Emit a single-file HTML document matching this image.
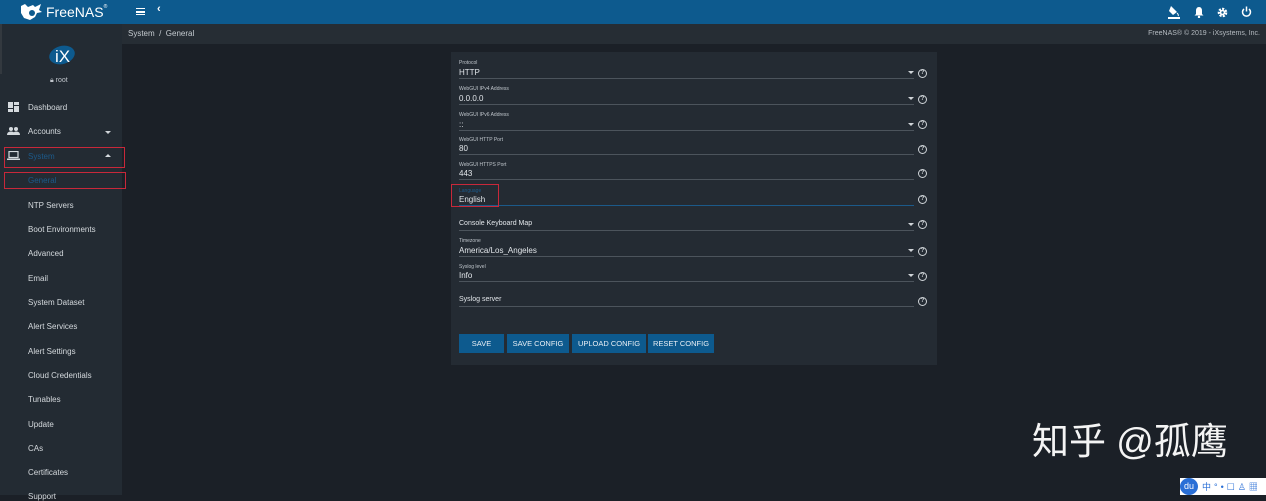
<!DOCTYPE html>
<html><head><meta charset="utf-8"><style>
*{margin:0;padding:0;box-sizing:border-box}
body{width:1266px;height:495px;overflow:hidden;background:#1b2027;font-family:"Liberation Sans","Noto Sans CJK SC",sans-serif;color:#d8dde2;position:relative}
.a{position:absolute}
#top{left:0;top:0;width:1266px;height:24px;background:#0d5a8e}
#side{left:0;top:24px;width:122px;height:471px;background:#232b33}
#crumb{left:122px;top:24px;width:1144px;height:20px;background:#262d34}
.nav{position:absolute;left:28px;font-size:8px;color:#d5dade}
.card{left:451px;top:52px;width:486px;height:313px;background:#242b33}
.lbl{position:absolute;left:459px;font-size:5px;color:#bfc5cb}
.val{position:absolute;left:459px;font-size:8px;color:#e2e6ea}
.ln{position:absolute;left:459px;width:455px;height:1px;background:#4c545c}
.q{position:absolute;left:918px;width:9px;height:9px;border:1px solid #cfd4d8;border-radius:50%;font-size:6px;line-height:7px;text-align:center;color:#cfd4d8;font-weight:bold}
.dd{position:absolute;left:908px;width:0;height:0;border-left:3px solid transparent;border-right:3px solid transparent;border-top:3px solid #cfd4d8}
.btn{position:absolute;top:334px;height:19px;background:#0d5a8e;color:#e8eef4;font-size:7.5px;line-height:19px;text-align:center}
.red{position:absolute;border:1px solid #c8283a}
</style></head><body>
<div id="top" class="a">
<svg class="a" style="left:19px;top:3px" width="24" height="18" viewBox="0 0 24 18"><path d="M2 3 L6 1 L9 4 L14 2 L16 4 L22 1 L20 7 L23 9 L18 10 L16 14 L11 17 L5 15 L2 10 Z" fill="#fff"/><circle cx="13" cy="10" r="3" fill="#0d5a8e"/></svg>
<div class="a" style="left:46px;top:4px;font-size:14px;color:#fff">FreeNAS<span style="font-size:5px;vertical-align:top">®</span></div>
<div class="a" style="left:136px;top:8px;width:9px;height:7px;border-top:1.5px solid #fff;border-bottom:1.5px solid #fff"></div>
<div class="a" style="left:136px;top:11px;width:9px;height:1.5px;background:#fff"></div>
<div class="a" style="left:157px;top:3px;font-size:11px;color:#fff;font-weight:bold">‹</div>
<svg class="a" style="left:1168px;top:5px" width="12" height="14" viewBox="0 0 12 14"><path d="M3 1 L9 7 L5 10 L1 6 Z" fill="#fff"/><path d="M9 8 Q11 10 10 11" stroke="#fff" fill="none"/><rect x="0" y="12" width="12" height="2" fill="#fff"/></svg>
<svg class="a" style="left:1194px;top:6px" width="10" height="12" viewBox="0 0 10 12"><path d="M5 1 Q8 1 8 5 L8 8 L9.5 9.5 L0.5 9.5 L2 8 L2 5 Q2 1 5 1Z" fill="#fff"/><circle cx="5" cy="11" r="1.2" fill="#fff"/></svg>
<svg class="a" style="left:1217px;top:7px" width="11" height="11" viewBox="0 0 11 11"><circle cx="5.5" cy="5.5" r="3.5" fill="none" stroke="#fff" stroke-width="2.6" stroke-dasharray="2 1.2"/><circle cx="5.5" cy="5.5" r="2.8" fill="#fff"/><circle cx="5.5" cy="5.5" r="1.2" fill="#0d5a8e"/></svg>
<svg class="a" style="left:1241px;top:6px" width="11" height="11" viewBox="0 0 11 11"><path d="M3 3 A4 4 0 1 0 8 3" fill="none" stroke="#fff" stroke-width="1.5"/><path d="M5.5 0.5 V5.5" stroke="#fff" stroke-width="1.5"/></svg>
</div>
<div id="side" class="a">
<svg class="a" style="left:48px;top:20px" width="28" height="22" viewBox="0 0 28 22"><ellipse cx="14" cy="11" rx="13" ry="9" fill="#0d5a8e" transform="rotate(-15 14 11)"/><text x="7" y="18" font-size="17" fill="#fff" font-family="Liberation Sans">iX</text></svg>
<div class="a" style="left:50px;top:53px;font-size:7px;color:#bfc5cb">🔒︎ root</div>
</div>
<div class="a" style="left:0;top:24px;width:2px;height:50px;background:#33393f"></div>
<svg class="a" style="left:8px;top:102px" width="11" height="10" viewBox="0 0 11 10"><rect x="0" y="0" width="5" height="6" fill="#d5dade"/><rect x="6" y="0" width="5" height="3" fill="#d5dade"/><rect x="0" y="7" width="5" height="3" fill="#d5dade"/><rect x="6" y="4" width="5" height="6" fill="#d5dade"/></svg>
<div class="nav" style="top:103px">Dashboard</div>
<svg class="a" style="left:7px;top:127px" width="13" height="8" viewBox="0 0 13 8"><circle cx="4" cy="2" r="2" fill="#d5dade"/><circle cx="9" cy="2" r="2" fill="#d5dade"/><path d="M0 8 Q0 4.5 4 4.5 Q8 4.5 8 8Z M6 8 Q6 4.5 9 4.5 Q13 4.5 13 8Z" fill="#d5dade"/></svg>
<div class="nav" style="top:127px">Accounts</div>
<div class="dd" style="left:105px;top:131px"></div>
<svg class="a" style="left:7px;top:151px" width="13" height="9" viewBox="0 0 13 9"><rect x="2" y="0.5" width="9" height="6" fill="none" stroke="#d5dade" stroke-width="1.2"/><rect x="0" y="7.5" width="13" height="1.5" fill="#d5dade"/></svg>
<div class="nav" style="top:152px;color:#1c5a8a">System</div>
<div class="a" style="left:105px;top:154px;border-left:3px solid transparent;border-right:3px solid transparent;border-bottom:3px solid #d5dade"></div>
<div class="red" style="left:4px;top:147px;width:121px;height:21px"></div>
<div class="nav" style="top:176px;color:#1c5a8a">General</div>
<div class="red" style="left:4px;top:172px;width:122px;height:17px"></div>
<div class="nav" style="top:201px">NTP Servers</div>
<div class="nav" style="top:225px">Boot Environments</div>
<div class="nav" style="top:249px">Advanced</div>
<div class="nav" style="top:274px">Email</div>
<div class="nav" style="top:298px">System Dataset</div>
<div class="nav" style="top:322px">Alert Services</div>
<div class="nav" style="top:347px">Alert Settings</div>
<div class="nav" style="top:371px">Cloud Credentials</div>
<div class="nav" style="top:395px">Tunables</div>
<div class="nav" style="top:420px">Update</div>
<div class="nav" style="top:444px">CAs</div>
<div class="nav" style="top:468px">Certificates</div>
<div class="nav" style="top:492px">Support</div>
<div id="crumb" class="a"><div class="a" style="left:6px;top:5px;font-size:8px;color:#c5cbd0">System&nbsp; / &nbsp;General</div>
<div class="a" style="right:6px;top:6px;font-size:7px;color:#b5bbc1">FreeNAS® © 2019 - iXsystems, Inc.</div></div>
<div class="card a"></div>

<div class="lbl" style="top:60px">Protocol</div><div class="val" style="top:68px">HTTP</div><div class="ln" style="top:78px"></div><div class="dd" style="top:71px"></div><div class="q" style="top:69px">?</div>
<div class="lbl" style="top:86px">WebGUI IPv4 Address</div><div class="val" style="top:94px">0.0.0.0</div><div class="ln" style="top:104px"></div><div class="dd" style="top:97px"></div><div class="q" style="top:95px">?</div>
<div class="lbl" style="top:112px">WebGUI IPv6 Address</div><div class="val" style="top:120px">::</div><div class="ln" style="top:130px"></div><div class="dd" style="top:123px"></div><div class="q" style="top:120px">?</div>
<div class="lbl" style="top:137px">WebGUI HTTP Port</div><div class="val" style="top:144px">80</div><div class="ln" style="top:154px"></div><div class="q" style="top:145px">?</div>
<div class="lbl" style="top:162px">WebGUI HTTPS Port</div><div class="val" style="top:169px">443</div><div class="ln" style="top:179px"></div><div class="q" style="top:169px">?</div>
<div class="lbl" style="top:188px;color:#1c5a8a">Language</div><div class="val" style="top:195px">English</div><div class="ln" style="top:205px;background:#1c5a8a"></div><div class="q" style="top:195px">?</div>
<div class="red" style="left:451px;top:184px;width:48px;height:23px"></div>
<div class="val" style="top:220px;font-size:7px">Console Keyboard Map</div><div class="ln" style="top:230px"></div><div class="dd" style="top:223px"></div><div class="q" style="top:220px">?</div>
<div class="lbl" style="top:238px">Timezone</div><div class="val" style="top:246px">America/Los_Angeles</div><div class="ln" style="top:256px"></div><div class="dd" style="top:249px"></div><div class="q" style="top:247px">?</div>
<div class="lbl" style="top:264px">Syslog level</div><div class="val" style="top:271px">Info</div><div class="ln" style="top:281px"></div><div class="dd" style="top:274px"></div><div class="q" style="top:272px">?</div>
<div class="val" style="top:296px;font-size:7px">Syslog server</div><div class="ln" style="top:306px"></div><div class="q" style="top:297px">?</div>

<div class="btn" style="left:459px;width:45px">SAVE</div>
<div class="btn" style="left:507px;width:62px">SAVE CONFIG</div>
<div class="btn" style="left:572px;width:74px">UPLOAD CONFIG</div>
<div class="btn" style="left:648px;width:66px">RESET CONFIG</div>

<div class="a" style="left:1032px;top:420px;font-size:37px;color:#f4f4f4;font-family:'Liberation Sans','Noto Sans CJK SC',sans-serif;line-height:44px;white-space:nowrap">知乎 @孤鹰</div>
<div class="a" style="left:1180px;top:478px;width:86px;height:17px;background:#fff"></div>
<div class="a" style="left:1180px;top:478px;width:18px;height:17px;border-radius:50%;background:#2a6fd6;color:#fff;font-size:9px;text-align:center;line-height:17px">du</div>
<div class="a" style="left:1202px;top:480px;font-size:9px;color:#2a6fd6;letter-spacing:3px">中°•☐♙▦</div>
</body></html>
